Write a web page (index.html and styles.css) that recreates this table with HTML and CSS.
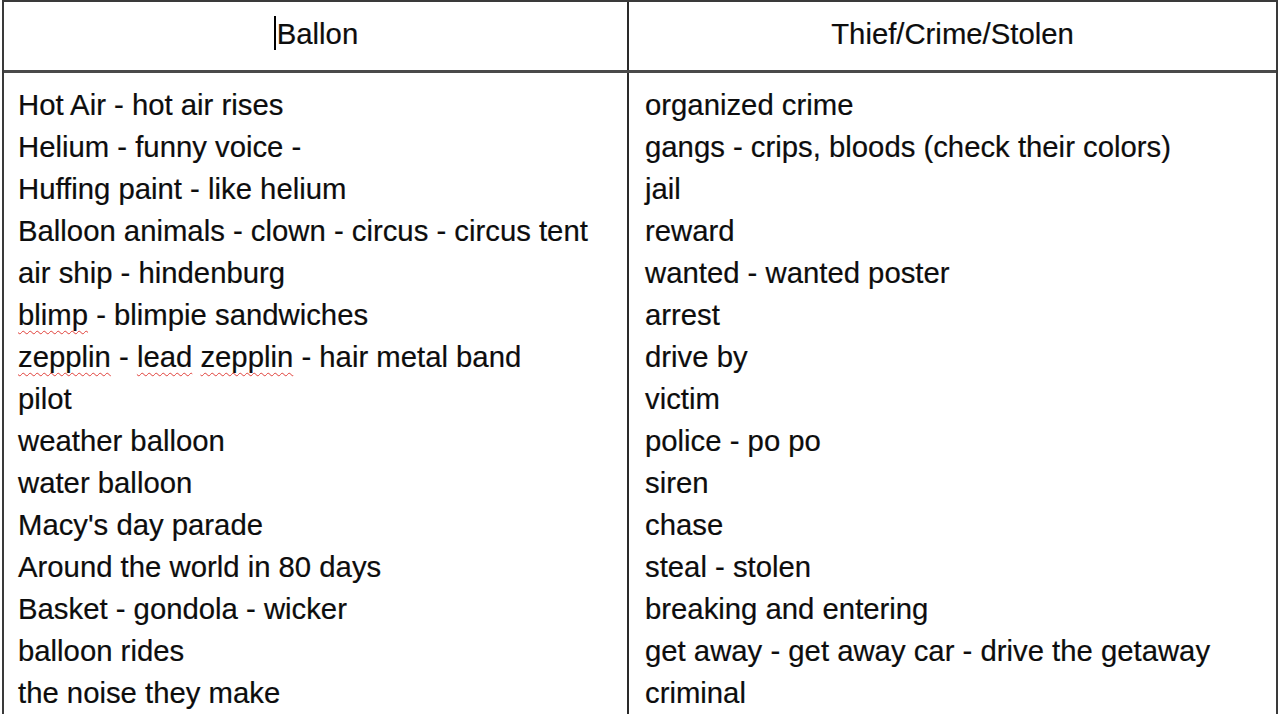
FILE: index.html
```html
<!DOCTYPE html>
<html>
<head>
<meta charset="utf-8">
<link rel="stylesheet" href="styles.css">
</head>
<body>
<div class="table">
  <div class="head">
    <div class="hcell hcell-left"><span class="htext"><span class="caret"></span>Ballon</span></div>
    <div class="hcell">Thief/Crime/Stolen</div>
  </div>
  <div class="body">
    <div class="cell cell-left">
      <div class="line">Hot Air - hot air rises</div>
      <div class="line">Helium - funny voice -</div>
      <div class="line">Huffing paint - like helium</div>
      <div class="line">Balloon animals - clown - circus - circus tent</div>
      <div class="line">air ship - hindenburg</div>
      <div class="line"><span class="sp">blimp</span> - blimpie sandwiches</div>
      <div class="line"><span class="sp">zepplin</span> - <span class="sp">lead</span> <span class="sp">zepplin</span> - hair metal band</div>
      <div class="line">pilot</div>
      <div class="line">weather balloon</div>
      <div class="line">water balloon</div>
      <div class="line">Macy's day parade</div>
      <div class="line">Around the world in 80 days</div>
      <div class="line">Basket - gondola - wicker</div>
      <div class="line">balloon rides</div>
      <div class="line">the noise they make</div>
    </div>
    <div class="cell cell-right">
      <div class="line">organized crime</div>
      <div class="line">gangs - crips, bloods (check their colors)</div>
      <div class="line">jail</div>
      <div class="line">reward</div>
      <div class="line">wanted - wanted poster</div>
      <div class="line">arrest</div>
      <div class="line">drive by</div>
      <div class="line">victim</div>
      <div class="line">police - po po</div>
      <div class="line">siren</div>
      <div class="line">chase</div>
      <div class="line">steal - stolen</div>
      <div class="line">breaking and entering</div>
      <div class="line">get away - get away car - drive the getaway</div>
      <div class="line">criminal</div>
    </div>
  </div>
</div>
</body>
</html>
```
FILE: styles.css
```css
html, body {
  margin: 0;
  padding: 0;
  background: #ffffff;
  overflow: hidden;
}
body {
  font-family: "Liberation Sans", Arial, sans-serif;
  color: #0d0d0d;
  font-size: 29.3px;
  -webkit-text-stroke: 0.2px #0d0d0d;
}
.table {
  margin-left: 2px;
  width: 1276px;
  border: 2px solid #3a3a3a;
  border-bottom: none;
  box-sizing: border-box;
}
.head {
  display: grid;
  grid-template-columns: 625px 1fr;
  height: 68px;
  border-bottom: 3px solid #4a4a4a;
}
.hcell {
  display: flex;
  align-items: center;
  justify-content: center;
  padding-bottom: 4px;
  box-sizing: border-box;
}
.hcell-left {
  border-right: 2px solid #2a2a2a;
}
.htext {
  position: relative;
  left: 2px;
}
.caret {
  position: absolute;
  left: -3px;
  top: -1px;
  width: 2px;
  height: 34px;
  background: #000;
}
.body {
  display: grid;
  grid-template-columns: 625px 1fr;
}
.cell {
  padding: 11px 14px 0 14px;
}
.cell-left {
  border-right: 2px solid #2a2a2a;
}
.cell-right {
  padding-left: 16px;
}
.line {
  height: 42px;
  line-height: 42px;
  white-space: nowrap;
}
.sp {
  text-decoration: underline wavy #e0403a;
  text-decoration-thickness: 1px;
  text-decoration-skip-ink: none;
  text-underline-offset: 5px;
}
```
